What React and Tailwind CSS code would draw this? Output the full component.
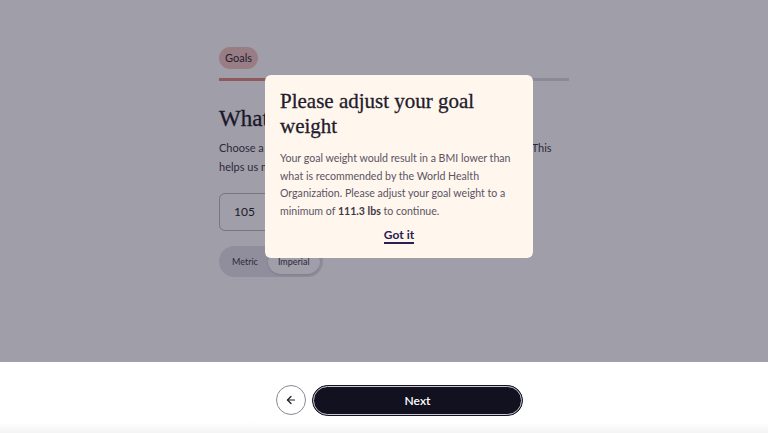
import React from "react";

const sans = { fontFamily: "Lato, 'Open Sans', sans-serif" };
const serif = { fontFamily: "'Liberation Serif', 'DejaVu Serif', serif" };

export default function App() {
  return (
    <div className="w-[768px] h-[433px] overflow-hidden bg-white flex flex-col" style={sans}>
      <div className="relative h-[362px] bg-white">
        <div className="w-[350px] ml-[219px] pt-[47px] flex flex-col">
          <div className="flex">
            <div className="h-[22px] px-[6px] rounded-full bg-[#f3c7c1] text-[#2a2434] text-[11px] flex items-center">Goals</div>
          </div>
          <div className="mt-[9px] flex h-[3px]">
            <div className="w-[60px] bg-[#e08a7c]" />
            <div className="flex-1 bg-[#dcdbe4]" />
          </div>
          <h1 className="mt-[24px] text-[23px] text-[#1a1726] leading-[28px] [-webkit-text-stroke:0.3px]" style={serif}>What is your goal weight?</h1>
          <p className="mt-[5px] w-[345px] text-[11px] leading-[19px] text-[#3a3544]">Choose a realistic goal weight that you would really like to reach. This<br />helps us make a plan that works for you.</p>
          <div className="mt-[17px] h-[38px] w-[200px] rounded-[6px] border border-[#b9b7c2] flex items-center px-[14px] text-[12px] text-[#1a1726]">105</div>
          <div className="mt-[15px] flex">
            <div className="h-[31px] rounded-full bg-[#e3e2ea] p-[3px] flex items-center text-[9px] text-[#3a3544]">
              <div className="px-[10px]">Metric</div>
              <div className="h-full px-[10px] rounded-full bg-white flex items-center shadow-sm">Imperial</div>
            </div>
          </div>
        </div>
        <div className="absolute inset-0 bg-[rgba(28,25,48,0.42)]" />
        <div className="absolute left-[265px] top-[75px] w-[268px] h-[183px] rounded-[6px] bg-[#fff6ee] px-[15px] pt-[14px] flex flex-col">
          <h2 className="text-[21px] leading-[25px] text-[#1f1c2c] [-webkit-text-stroke:0.3px]" style={serif}>Please adjust your goal weight</h2>
          <p className="mt-[11px] text-[10.6px] leading-[17.7px] text-[#5a5462]">
            Your goal weight would result in a BMI lower than what is recommended by the World Health Organization. Please adjust your goal weight to a minimum of <span className="font-bold text-[#3f3947]">111.3 lbs</span> to continue.
          </p>
          <div className="mt-[6px] flex justify-center">
            <span className="text-[12px] font-bold text-[#2a2050] border-b-2 border-[#2a2050] leading-[15px]">Got it</span>
          </div>
        </div>
      </div>
      <div className="flex-1 flex items-start gap-[6px] pl-[276px] pt-[23px] bg-gradient-to-b from-white from-[85%] to-[#f3f3f3]">
        <button className="w-[30px] h-[30px] rounded-full border border-[#8a8890] bg-white flex items-center justify-center">
          <svg width="12" height="12" viewBox="0 0 24 24" fill="none" stroke="#1a1726" strokeWidth="2.4" strokeLinecap="round" strokeLinejoin="round">
            <path d="M19 12H5" />
            <path d="M12 19l-7-7 7-7" />
          </svg>
        </button>
        <button className="w-[211px] h-[31px] rounded-full bg-[#111120] border-[1.5px] border-[#111120] p-0 flex">
          <span className="flex-1 rounded-full border border-[#c9c8d2] flex items-center justify-center text-white text-[12px] font-semibold">Next</span>
        </button>
      </div>
    </div>
  );
}
